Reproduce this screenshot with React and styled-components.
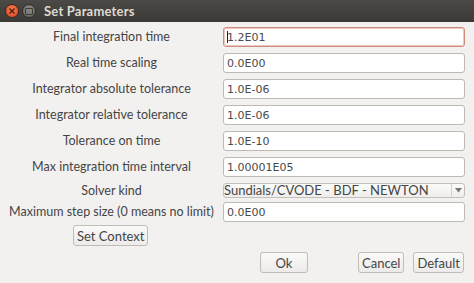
import React from 'react';
import styled, { createGlobalStyle } from 'styled-components';

const GlobalStyle = createGlobalStyle`
  html, body {
    margin: 0;
    padding: 0;
    background: #f2f1f0;
  }
`;

const fields = [
  { label: 'Final integration time', value: '1.2E01', focused: true },
  { label: 'Real time scaling', value: '0.0E00' },
  { label: 'Integrator absolute tolerance', value: '1.0E-06' },
  { label: 'Integrator relative tolerance', value: '1.0E-06' },
  { label: 'Tolerance on time', value: '1.0E-10' },
  { label: 'Max integration time interval', value: '1.00001E05' },
];

const App = () => {
  return (
    <Window>
      <GlobalStyle />
      <TitleBar>
        <CloseDot>
          <svg width="8" height="8" viewBox="0 0 8 8">
            <path d="M1.5 1.5 L6.5 6.5 M6.5 1.5 L1.5 6.5" stroke="#4a1e10" strokeWidth="1.4" />
          </svg>
        </CloseDot>
        <MinDot><MinMark /></MinDot>
        <Title>Set Parameters</Title>
      </TitleBar>
      <Form>
        {fields.map((f) => (
          <Row key={f.label}>
            <Label>{f.label}</Label>
            <Field focused={f.focused}>
              {f.focused && <Caret />}
              {f.value}
            </Field>
          </Row>
        ))}
        <Row tight>
          <Label>Solver kind</Label>
          <Combo>
            <ComboText>Sundials/CVODE - BDF - NEWTON</ComboText>
            <ComboArrow>
              <svg width="7" height="5" viewBox="0 0 7 5">
                <path d="M0 0 L7 0 L3.5 4.5 Z" fill="#7a7874" />
              </svg>
            </ComboArrow>
          </Combo>
        </Row>
        <Row>
          <Label>Maximum step size (0 means no limit)</Label>
          <Field>0.0E00</Field>
        </Row>
        <ContextRow>
          <Button>Set Context</Button>
        </ContextRow>
      </Form>
      <Footer>
        <Button wide={48} style={{ marginRight: 41 }}>Ok</Button>
        <Button>Cancel</Button>
        <Button>Default</Button>
      </Footer>
    </Window>
  );
};

const Window = styled.div`
  width: 474px;
  height: 283px;
  background: #f2f1f0;
  font-family: Lato, "Open Sans", sans-serif;
  color: #454545;
  overflow: hidden;
`;

const TitleBar = styled.div`
  height: 22px;
  background: linear-gradient(#4b4a46, #3a3935);
  display: flex;
  align-items: center;
  padding-left: 5px;
`;

const CloseDot = styled.div`
  width: 14px;
  height: 14px;
  border-radius: 50%;
  background: radial-gradient(circle at 50% 35%, #f77a4f, #d9471c);
  border: 1px solid #3a2a22;
  box-sizing: border-box;
  display: flex;
  align-items: center;
  justify-content: center;
`;

const MinDot = styled.div`
  width: 14px;
  height: 14px;
  border-radius: 50%;
  background: radial-gradient(circle at 50% 35%, #8a8983, #65645f);
  border: 1px solid #2e2d2a;
  box-sizing: border-box;
  margin-left: 3px;
  display: flex;
  align-items: center;
  justify-content: center;
`;

const MinMark = styled.div`
  width: 6px;
  height: 5px;
  border: 1px solid #3c3b37;
  border-radius: 1px;
`;

const Title = styled.div`
  margin-left: 8px;
  font-family: Lato, "Open Sans", sans-serif;
  font-weight: bold;
  font-size: 13px;
  color: #dfdbd2;
  letter-spacing: 0.2px;
`;

const Form = styled.div`
  display: flex;
  flex-direction: column;
  padding: 5px 9px 0 0;
  gap: 6px;
`;

const Row = styled.div`
  display: grid;
  grid-template-columns: 223px 1fr;
  align-items: center;
  margin-bottom: ${({ tight }) => (tight ? '-2px' : '0')};
`;

const Label = styled.div`
  font-size: 12.5px;
  line-height: 14px;
  text-align: center;
  white-space: nowrap;
`;

const Field = styled.div`
  height: 20px;
  box-sizing: border-box;
  background: #ffffff;
  border: 1px solid ${({ focused }) => (focused ? '#cf8c7e' : '#bdbab4')};
  box-shadow: ${({ focused }) => (focused ? 'inset 0 0 0 1px #ecc9c0' : 'none')};
  border-radius: 3px;
  font-family: "DejaVu Sans", sans-serif;
  font-size: 11px;
  color: #4a4a4a;
  padding-left: 3px;
  display: flex;
  align-items: center;
`;

const Caret = styled.span`
  display: inline-block;
  width: 1px;
  height: 12px;
  background: #222;
  margin-right: -1px;
`;

const Combo = styled.div`
  height: 15px;
  box-sizing: border-box;
  border: 1px solid #c3c0ba;
  border-radius: 3px;
  background: linear-gradient(#fbfbfa, #efeeec);
  display: flex;
  align-items: center;
`;

const ComboText = styled.div`
  flex: 1;
  font-size: 13px;
  line-height: 13px;
  white-space: nowrap;
`;

const ComboArrow = styled.div`
  width: 12px;
  height: 100%;
  border-left: 1px solid #d4d2cd;
  display: flex;
  align-items: center;
  justify-content: center;
`;

const ContextRow = styled.div`
  display: flex;
  padding-left: 73px;
  margin-top: -3px;
`;

const Button = styled.button`
  height: 21px;
  min-width: ${({ wide }) => (wide ? `${wide}px` : 'auto')};
  box-sizing: border-box;
  padding: 0 3px;
  border: 1px solid #c0bdb6;
  border-radius: 3px;
  background: linear-gradient(#fafaf9, #edebe9);
  font-family: Lato, "Open Sans", sans-serif;
  font-size: 13px;
  color: #454545;
  cursor: pointer;
`;

const Footer = styled.div`
  display: flex;
  justify-content: flex-end;
  gap: 9px;
  padding: 6px 10px 0 0;
`;

export default App;
